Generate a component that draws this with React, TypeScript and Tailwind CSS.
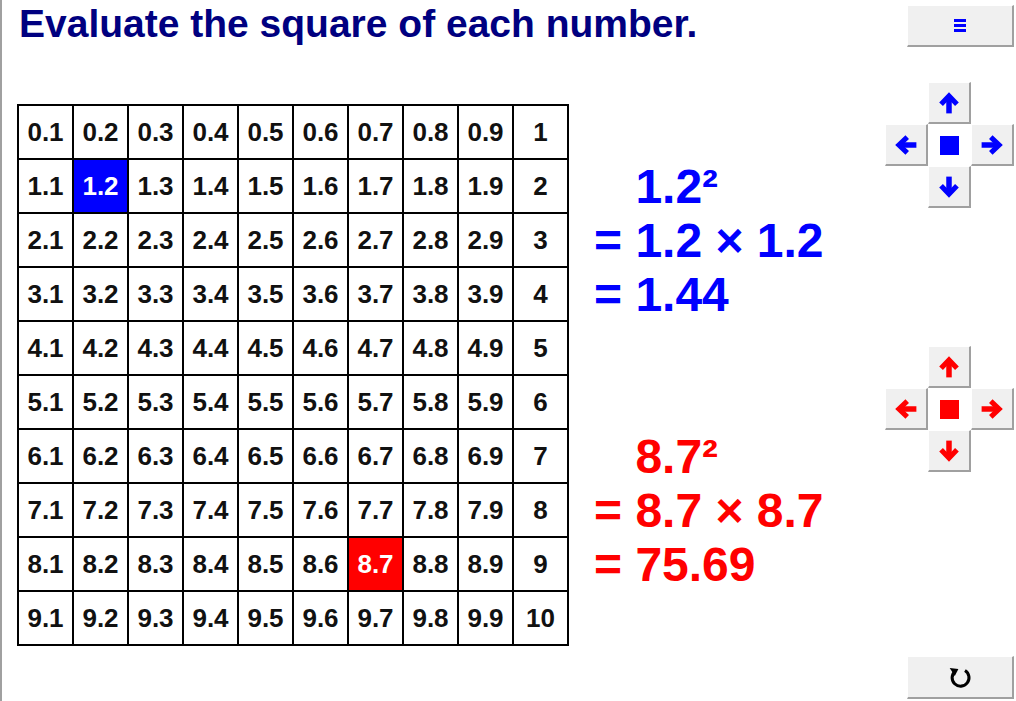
import React from 'react'

const FONT = { fontFamily: '"Liberation Sans", Arial, sans-serif' }

const ROWS = Array.from({ length: 10 }, (_, r) =>
  Array.from({ length: 10 }, (_, c) => (c === 9 ? `${r + 1}` : `${r}.${c + 1}`)),
)

const MARKS: Record<string, string> = {
  '1.2': 'bg-[#0000ff] text-white',
  '8.7': 'bg-[#ff0000] text-white',
}

function Arrow({ dir, color }: { dir: 'up' | 'down' | 'left' | 'right'; color: string }) {
  const rot = { up: 0, right: 90, down: 180, left: 270 }[dir]
  return (
    <svg width="22" height="22" viewBox="0 0 18 18" style={{ transform: `rotate(${rot}deg)` }}>
      <path d="M9 17.5V4" stroke={color} strokeWidth="4.5" fill="none" />
      <path d="M2.5 10L9 3.2L15.5 10" stroke={color} strokeWidth="4.2" fill="none" strokeLinejoin="miter" />
    </svg>
  )
}

const BTN = 'flex items-center justify-center bg-[#f0f0f0] border-t border-l border-t-white border-l-white border-b-2 border-r-2 border-b-[#a0a0a0] border-r-[#a0a0a0]'

function DPad({ color, sq }: { color: string; sq: string }) {
  return (
    <div className="grid grid-cols-[43px_43px_43px] grid-rows-[42px_42px_42px]">
      <div />
      <div className={BTN}><Arrow dir="up" color={color} /></div>
      <div />
      <div className={BTN}><Arrow dir="left" color={color} /></div>
      <div className="flex items-center justify-center bg-white">
        <div className={`w-[19px] h-[19px] ${sq}`} />
      </div>
      <div className={BTN}><Arrow dir="right" color={color} /></div>
      <div />
      <div className={BTN}><Arrow dir="down" color={color} /></div>
      <div />
    </div>
  )
}

function Steps({ base, result, color }: { base: string; result: string; color: string }) {
  const line = 'h-[54px] flex items-center whitespace-pre'
  return (
    <div className={color}>
      <div className={line}><span className="invisible">= </span>{base}²</div>
      <div className={line}>= {base} × {base}</div>
      <div className={line}>= {result}</div>
    </div>
  )
}

export default function App() {
  return (
    <div className="w-[1016px] h-[701px] bg-white border-l-2 border-[#a0a0a0] flex overflow-hidden" style={FONT}>
      <div className="flex-1 flex flex-col pl-[15px]">
        <h1 className="ml-[2px] pt-[2px] text-[39px] leading-[44px] font-bold text-[#000080]">
          Evaluate the square of each number.
        </h1>

        <div className="mt-[58px] flex items-start gap-[25px]">
          <div className="grid grid-cols-[repeat(10,53px)] auto-rows-[52px] gap-[2px] p-[2px] bg-black">
            {ROWS.flat().map((v) => (
              <div
                key={v}
                className={`flex items-center justify-center text-[26px] font-bold ${MARKS[v] ?? 'bg-white text-[#111]'}`}
              >
                {v}
              </div>
            ))}
          </div>

          <div className="pt-[2px] text-[48px] leading-none font-bold">
            <div className="h-[54px]" />
            <Steps base="1.2" result="1.44" color="text-[#0000ff]" />
            <div className="h-[108px]" />
            <Steps base="8.7" result="75.69" color="text-[#ff0000]" />
          </div>
        </div>
      </div>

      <div className="w-[131px] mr-[2px] flex flex-col items-end">
        <div className={`${BTN} mt-[5px] w-[107px] h-[42px]`}>
          <svg width="14" height="15" viewBox="0 0 14 15">
            <rect x="1" y="1" width="12" height="3" fill="#0000ff" />
            <rect x="1" y="6" width="12" height="3" fill="#0000ff" />
            <rect x="1" y="11" width="12" height="3" fill="#0000ff" />
          </svg>
        </div>

        <div className="mt-[35px]">
          <DPad color="#0000ff" sq="bg-[#0000ff]" />
        </div>

        <div className="mt-[138px]">
          <DPad color="#ff0000" sq="bg-[#ff0000]" />
        </div>

        <div className={`${BTN} mt-auto mb-[2px] w-[107px] h-[43px]`}>
          <svg width="26" height="24" viewBox="0 0 24 22">
            <path d="M7.6 5.6A7.8 7.8 0 1 0 16.6 5" stroke="#000" strokeWidth="2.8" fill="none" />
            <path d="M2.5 2.8L10.5 3.6L7.2 10Z" fill="#000" />
          </svg>
        </div>
      </div>
    </div>
  )
}
